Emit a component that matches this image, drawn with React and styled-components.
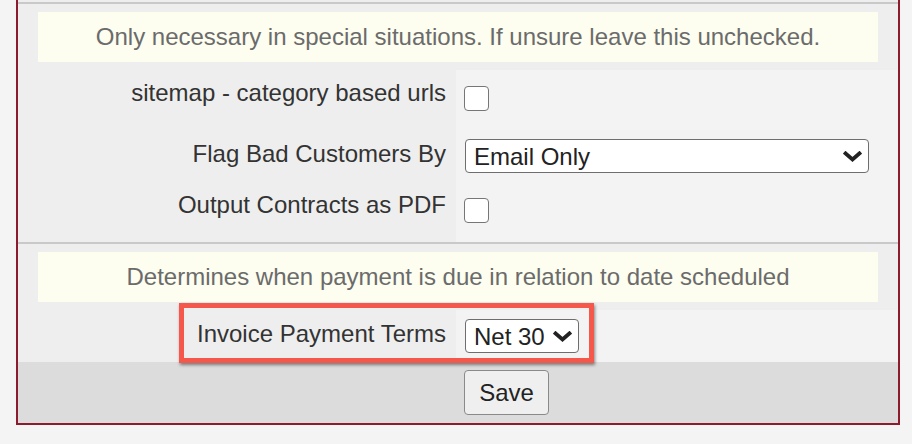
import React from "react";
import styled, { createGlobalStyle } from "styled-components";

const GlobalStyle = createGlobalStyle`
  html, body {
    margin: 0;
    padding: 0;
    background: #f4f4f4;
    font-family: "Liberation Sans", Arial, Helvetica, sans-serif;
    overflow: hidden;
  }
`;

const Panel = styled.div`
  box-sizing: border-box;
  width: 884px;
  margin-left: 16px;
  padding-top: 2px;
  background: #eeeeee;
  border: 2px solid #8c1c2d;
  border-top: none;
`;

const Section = styled.section`
  border-top: 2px solid #c9c9c9;
  padding-top: 8px;
`;

const Note = styled.div`
  margin: 0 20px 8px;
  height: 50px;
  line-height: 50px;
  background: #fdfeef;
  color: #6b6b6b;
  text-align: center;
  font-size: 24px;
`;

const Row = styled.div`
  position: relative;
  display: grid;
  grid-template-columns: 438px 1fr;
`;

const Label = styled.label`
  padding: ${(p) => p.$top}px 10px 0 0;
  text-align: right;
  font-size: 24px;
  line-height: 28px;
  color: #333333;
`;

const Control = styled.div`
  display: flex;
  align-items: flex-start;
  padding: ${(p) => p.$top}px 8px ${(p) => p.$bottom}px;
  background: #f3f3f3;
`;

const Footer = styled.div`
  display: grid;
  grid-template-columns: 438px 1fr;
  background: #dcdcdc;
`;

const FooterCell = styled.div`
  padding: 8px;
`;

const Checkbox = styled.input.attrs({ type: "checkbox" })`
  appearance: none;
  box-sizing: border-box;
  width: 25px;
  height: 25px;
  margin: 0;
  border: 1.5px solid #767676;
  border-radius: 4px;
  background: #ffffff;
`;

const SelectWrap = styled.div`
  position: relative;
  margin-left: 1px;
  width: ${(p) => p.$width}px;
`;

const Select = styled.select`
  appearance: none;
  box-sizing: border-box;
  width: 100%;
  height: 34px;
  padding: 0 30px 0 8px;
  border: 1px solid #6e6e6e;
  border-radius: 4px;
  background: #ffffff;
  color: #222222;
  font-family: "Liberation Sans", Arial, sans-serif;
  font-size: 24px;
`;

const Chevron = styled.svg`
  position: absolute;
  right: 7px;
  top: 12px;
  pointer-events: none;
`;

const Highlight = styled.div`
  position: absolute;
  left: 161px;
  top: -7px;
  box-sizing: border-box;
  width: 415px;
  height: 60px;
  border: 5px solid #f5584b;
  box-shadow: 1px 2px 3px rgba(0, 0, 0, 0.45);
  pointer-events: none;
`;

const SaveButton = styled.button`
  box-sizing: border-box;
  width: 85px;
  height: 45px;
  border: 1px solid #8a8a8a;
  border-radius: 4px;
  background: #efefef;
  color: #222222;
  font-family: "Liberation Sans", Arial, sans-serif;
  font-size: 24px;
`;

function Dropdown({ width, value }) {
  return (
    <SelectWrap $width={width}>
      <Select defaultValue={value}>
        <option>{value}</option>
      </Select>
      <Chevron width="19" height="11" viewBox="0 0 19 11">
        <path
          d="M2.6 2.4 L9.5 8.4 L16.4 2.4"
          fill="none"
          stroke="#222"
          strokeWidth="3.8"
          strokeLinecap="square"
          strokeLinejoin="miter"
        />
      </Chevron>
    </SelectWrap>
  );
}

export default function App() {
  return (
    <>
      <GlobalStyle />
      <Panel>
        <Section>
          <Note>Only necessary in special situations. If unsure leave this unchecked.</Note>
          <Row>
            <Label $top={9}>sitemap - category based urls</Label>
            <Control $top={16} $bottom={16}>
              <Checkbox />
            </Control>
          </Row>
          <Row>
            <Label $top={13}>Flag Bad Customers By</Label>
            <Control $top={12} $bottom={9}>
              <Dropdown width={404} value="Email Only" />
            </Control>
          </Row>
          <Row>
            <Label $top={9}>Output Contracts as PDF</Label>
            <Control $top={16} $bottom={19}>
              <Checkbox />
            </Control>
          </Row>
        </Section>
        <Section>
          <Note>Determines when payment is due in relation to date scheduled</Note>
          <Row>
            <Label $top={10}>Invoice Payment Terms</Label>
            <Control $top={9} $bottom={9}>
              <Dropdown width={114} value="Net 30" />
            </Control>
            <Highlight />
          </Row>
        </Section>
        <Footer>
          <div />
          <FooterCell>
            <SaveButton>Save</SaveButton>
          </FooterCell>
        </Footer>
      </Panel>
    </>
  );
}
